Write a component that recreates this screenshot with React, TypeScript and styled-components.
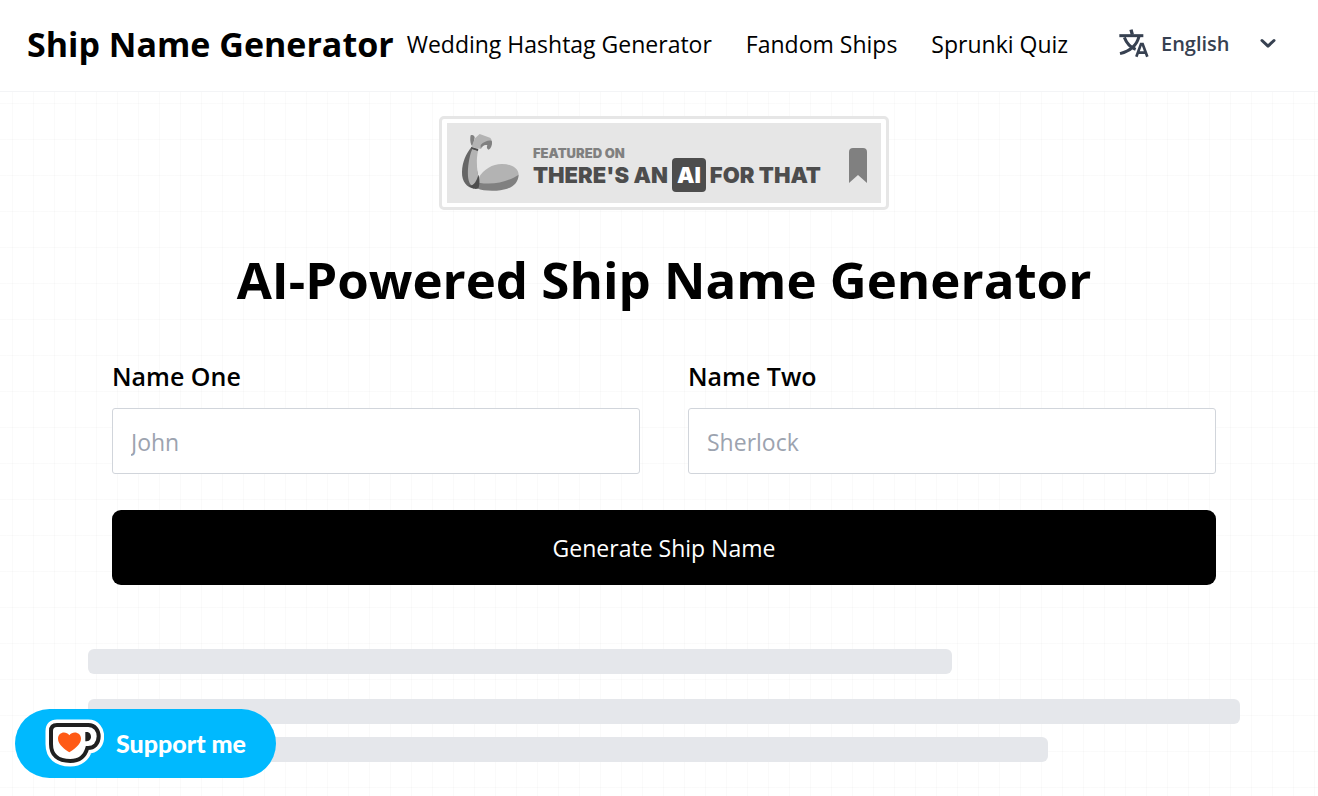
import React from "react";
import styled, { createGlobalStyle } from "styled-components";

const GlobalStyle = createGlobalStyle`
  *, *::before, *::after { box-sizing: border-box; }
  body {
    margin: 0;
    background: #fff;
    color: #000;
    font-family: "Open Sans", "Noto Sans", sans-serif;
    font-size: 23px;
    line-height: 36px;
  }
  button, input, select { font: inherit; color: inherit; margin: 0; }
  a { color: inherit; text-decoration: none; }
`;

const Page = styled.div`
  min-height: 100vh;
  display: flex;
  flex-direction: column;
`;

const Header = styled.header`
  display: flex;
  align-items: center;
  padding: 0 38px 4px 27px;
  height: 92px;
  border-bottom: 1px solid #f3f4f6;
  white-space: nowrap;
`;

const Brand = styled.a`
  font-size: 34px;
  font-weight: 700;
  line-height: 48px;
`;

const Nav = styled.nav`
  display: flex;
  gap: 34px;
  margin-left: 13px;
`;

const Language = styled.label`
  display: flex;
  align-items: center;
  margin-left: auto;
  color: #374151;
`;

const LanguageSelect = styled.select`
  appearance: none;
  border: 0;
  background: transparent;
  padding: 0;
  margin: 0 19px 0 12px;
  width: 76px;
  height: 36px;
  font-size: 20px;
  font-weight: 600;
`;

const Main = styled.main`
  flex: 1;
  display: flex;
  flex-direction: column;
  align-items: center;
  padding: 24px 78px 34px 88px;
  background-image:
    linear-gradient(to right, #8080800a 1px, transparent 1px),
    linear-gradient(to bottom, #8080800a 1px, transparent 1px);
  background-size: 21px 36px;
  background-position: 12px 11px;
`;

const Badge = styled.a`
  display: block;
  width: 450px;
  padding: 4px 5px;
  border: 3px solid #e6e6e6;
  border-radius: 5px;
  background: #fff;
`;

const BadgeInner = styled.span`
  display: flex;
  align-items: center;
  height: 80px;
  padding: 0 14px;
  background: #e6e6e6;
  white-space: nowrap;
`;

const BadgeText = styled.span`
  display: flex;
  flex-direction: column;
  margin: 0 auto 0 14px;
  padding-top: 14px;
  font-family: Inter, sans-serif;
  font-weight: 900;
`;

const BadgeSmall = styled.span`
  font-size: 13px;
  line-height: 10px;
  color: #808080;
`;

const BadgeLarge = styled.span`
  display: flex;
  align-items: center;
  gap: 4px;
  font-size: 22px;
  line-height: 34px;
  color: #4d4d4d;
`;

const BadgeMark = styled.span`
  padding: 0 5px;
  border-radius: 4px;
  background: #4d4d4d;
  color: #fff;
`;

const BookmarkIcon = styled.svg`
  display: block;
  margin-top: 4px;
`;

const Title = styled.h1`
  margin: 39px 0 0;
  font-size: 51px;
  line-height: 60px;
  font-weight: 700;
  text-align: center;
`;

const Form = styled.form`
  width: 100%;
  padding: 0 24px;
  margin-top: 49px;
`;

const Fields = styled.div`
  display: grid;
  grid-template-columns: 1fr 1fr;
  gap: 48px;
`;

const Field = styled.label`
  display: flex;
  flex-direction: column;
  gap: 14px;
  font-size: 25px;
  font-weight: 600;
`;

const TextInput = styled.input`
  width: 100%;
  height: 66px;
  padding: 2px 18px 0;
  border: 1px solid #d1d5db;
  border-radius: 3px;
  background: #fff;
  font-size: 23px;
  font-weight: 400;
  &::placeholder { color: #9ca3af; opacity: 1; }
`;

const Submit = styled.button`
  width: 100%;
  height: 75px;
  margin-top: 36px;
  border: 0;
  border-radius: 9px;
  background: #000;
  color: #fff;
`;

const Skeleton = styled.div`
  width: 100%;
  margin-top: 64px;
`;

const Bar = styled.div<{ $width: string; $gap?: number }>`
  width: ${(p) => p.$width};
  height: 25px;
  margin-top: ${(p) => p.$gap ?? 0}px;
  border-radius: 6px;
  background: #e5e7eb;
`;

const Support = styled.button`
  position: fixed;
  left: 15px;
  bottom: 18px;
  display: flex;
  align-items: center;
  gap: 12px;
  height: 69px;
  padding: 0 30px 2px 29px;
  border: 0;
  border-radius: 35px;
  background: #00b9fe;
  color: #fff;
  font-family: Lato, sans-serif;
  font-size: 25px;
  font-weight: 900;
  white-space: nowrap;
`;

const TranslateIcon = () => (
  <svg width="30" height="30" viewBox="59 43 90 90" fill="none" stroke="currentColor" aria-hidden="true">
    <path strokeWidth="9" d="M60 63H132" />
    <path strokeWidth="10" d="M95 45 99 60" />
    <path strokeWidth="9" d="M119 65C113 90 92 109 62 117M75 68C82 86 93 98 109 104" />
    <path strokeWidth="8" d="M111 126 125 88H130L144 126M117 114H138" />
  </svg>
);

const Chevron = () => (
  <svg width="24" height="24" viewBox="0 0 24 24" fill="none" stroke="currentColor" strokeWidth="3" strokeLinecap="round" strokeLinejoin="round" aria-hidden="true">
    <path d="M6 8.5 12 14.2 18 8.5" />
  </svg>
);

const Arm = () => (
  <svg width="58" height="58" viewBox="18 27 174 174" aria-hidden="true">
    <path fill="#808080" d="M47 31C53 28 58 31 59 38L54 62 49 61C45 50 45 38 47 31Z" />
    <path fill="#b3b3b3" d="M60 40 74 27 105 38C112 44 112 55 108 59L91 53 78 72 49 67Z" />
    <path fill="#808080" d="M77 60C88 47 110 43 111 50C112 60 108 70 101 74C96 72 94 67 97 61C89 58 82 64 77 70Z" />
    <path fill="#666" d="M49 67 69 74C62 85 60 110 69 150L57 191C36 188 20 170 21 141C22 111 33 87 49 67Z" />
    <path fill="#b3b3b3" d="M52 72 69 77C63 105 66 130 70 154C66 178 53 187 45 176C32 153 42 92 52 72Z" />
    <path fill="#b3b3b3" d="M71 158C86 132 115 116 142 117C170 117 190 130 191 149L160 181 71 180Z" />
    <path fill="#808080" d="M191 149C190 178 165 195 125 197C103 198 80 197 66 190L72 173C117 181 160 169 191 149Z" />
    <path fill="#4d4d4d" d="M70 149C75 163 74 181 70 190C60 195 48 189 41 181C55 185 65 169 70 149ZM48 66 70 72 69 78 49 71Z" />
  </svg>
);

const Bookmark = () => (
  <BookmarkIcon width="18" height="35" viewBox="0 0 18 35" aria-hidden="true">
    <path fill="#808080" d="M0 35V4a4 4 0 014-4h10a4 4 0 014 4v31l-9-8z" />
  </BookmarkIcon>
);

const cupOutline =
  "M66 46H160C180 46 191 62 191 80C191 102 177 116 157 115C150 140 132 154 106 154C68 154 48 136 48 103V64C48 52 54 46 66 46Z";

const Cup = () => (
  <svg width="60" height="48" viewBox="27 28 180 144" aria-hidden="true">
    <path d={cupOutline} fill="#fff" stroke="#fff" strokeWidth="33" />
    <path d={cupOutline} fill="#fff" stroke="#202020" strokeWidth="12" />
    <path fill="#202020" d="M151 67H158C165 69 168 75 168 81C168 89 163 95 151 95Z" />
    <path fill="#ff5a16" d="M103 128C91 120 69 105 69 87C69 67 93 62 103 77C113 62 138 67 138 87C138 105 115 120 103 128Z" />
  </svg>
);

export default function App() {
  return (
    <Page>
      <GlobalStyle />
      <Header>
        <Brand href="#">Ship Name Generator</Brand>
        <Nav>
          <a href="#wedding">Wedding Hashtag Generator</a>
          <a href="#fandom">Fandom Ships</a>
          <a href="#sprunki">Sprunki Quiz</a>
        </Nav>
        <Language>
          <TranslateIcon />
          <LanguageSelect aria-label="Language"><option>English</option></LanguageSelect>
          <Chevron />
        </Language>
      </Header>
      <Main>
        <Badge href="#featured">
          <BadgeInner>
            <Arm />
            <BadgeText>
              <BadgeSmall>FEATURED ON</BadgeSmall>
              <BadgeLarge>THERE'S AN<BadgeMark>AI</BadgeMark>FOR THAT</BadgeLarge>
            </BadgeText>
            <Bookmark />
          </BadgeInner>
        </Badge>
        <Title>AI-Powered Ship Name Generator</Title>
        <Form onSubmit={(e) => e.preventDefault()}>
          <Fields>
            <Field>Name One<TextInput placeholder="John" /></Field>
            <Field>Name Two<TextInput placeholder="Sherlock" /></Field>
          </Fields>
          <Submit type="submit">Generate Ship Name</Submit>
        </Form>
        <Skeleton aria-hidden="true">
          <Bar $width="75%" />
          <Bar $width="100%" $gap={25} />
          <Bar $width="83.333%" $gap={13} />
        </Skeleton>
      </Main>
      <Support type="button"><Cup />Support me</Support>
    </Page>
  );
}
